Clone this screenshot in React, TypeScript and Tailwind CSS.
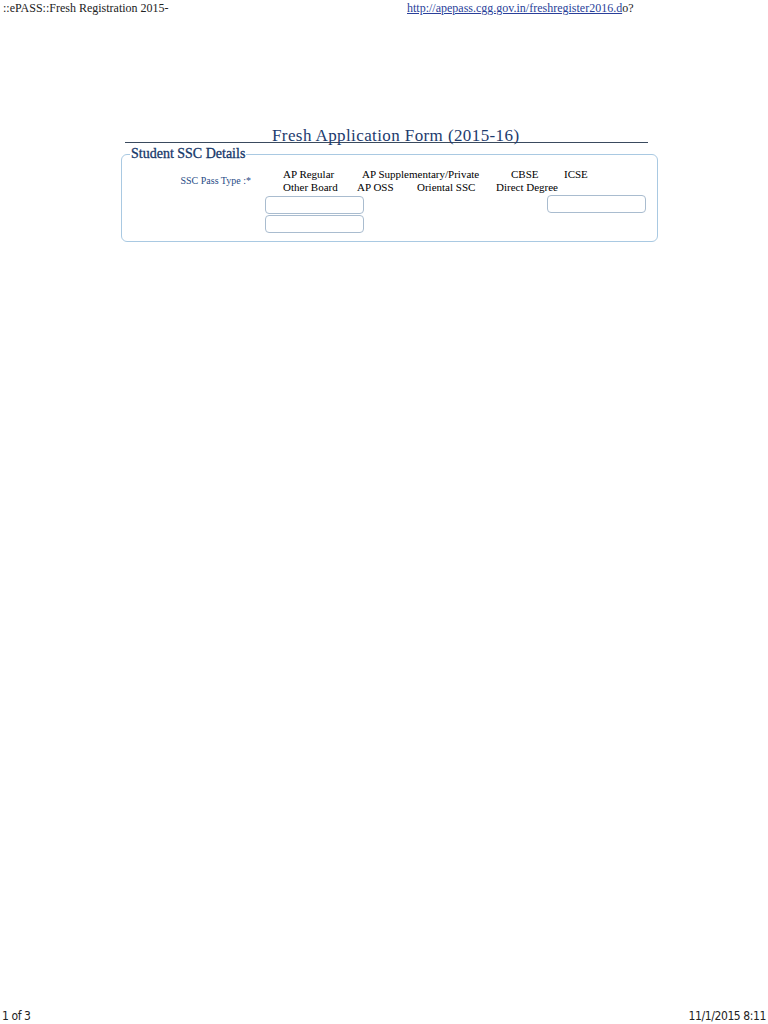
const serif = { fontFamily: '"Liberation Serif", "Times New Roman", serif' };

export default function App() {
	return (
		<div
			className="relative flex h-[1024px] w-[768px] flex-col bg-white text-black"
			style={serif}>
			{/* browser print header */}
			<div className="flex pl-[3px] pt-[1px] text-[12px] leading-[14px] text-[#222]">
				<span className="w-[404px]">::ePASS::Fresh Registration 2015-</span>
				<span>
					<span className="text-[#2a3f9a] underline">http://apepass.cgg.gov.in/freshregister2016.d</span>o?
				</span>
			</div>

			{/* form title */}
			<div className="ml-[125px] mt-[114px] w-[523px] border-b border-[#3a4a5e] pl-[147px] text-[17px] leading-[13px] tracking-[0.4px] text-[#1d3b6e]">
				Fresh Application Form (2015-16)
			</div>

			<fieldset className="ml-[121px] mt-[4px] h-[95px] w-[537px] rounded-[6px] border border-[#a9c9e2] px-[8px]">
				<legend className="px-[1px] text-[14px] leading-[14px] text-[#17386a] [-webkit-text-stroke:0.3px_#17386a]">
					Student SSC Details
				</legend>
				<div className="flex pt-[7px]">
					<div className="w-[121px] pt-[7px] text-right text-[10px] leading-[12px] text-[#1f4b86]">
						SSC Pass Type :*
					</div>
					<div className="ml-[14px] flex flex-col">
						<div className="flex pl-[18px] text-[11px] leading-[13px]">
							<span className="w-[79px]">AP Regular</span>
							<span className="w-[149px]">AP Supplementary/Private</span>
							<span className="w-[53px]">CBSE</span>
							<span>ICSE</span>
						</div>
						<div className="flex pl-[18px] text-[11px] leading-[13px]">
							<span className="w-[74px]">Other Board</span>
							<span className="w-[60px]">AP OSS</span>
							<span className="w-[79px]">Oriental SSC</span>
							<span>Direct Degree</span>
						</div>
						<div className="flex items-start">
							<div className="flex flex-col gap-[1px] pt-[2px]">
								<div className="h-[18px] w-[99px] rounded-[4px] border border-[#a9bccf]" />
								<div className="h-[18px] w-[99px] rounded-[4px] border border-[#a9bccf]" />
							</div>
							<div className="ml-[183px] mt-[1px] h-[18px] w-[99px] rounded-[4px] border border-[#a9bccf]" />
						</div>
					</div>
				</div>
			</fieldset>

			{/* browser print footer */}
			<div
				className="mt-auto mb-[1px] flex justify-between px-[2px] text-[12px] leading-[14px] tracking-[-0.4px] text-[#222]"
				style={{ fontFamily: '"DejaVu Sans Condensed", "Liberation Sans Narrow", "Liberation Sans", sans-serif' }}>
				<span>1 of 3</span>
				<span>11/1/2015 8:11</span>
			</div>
		</div>
	);
}
